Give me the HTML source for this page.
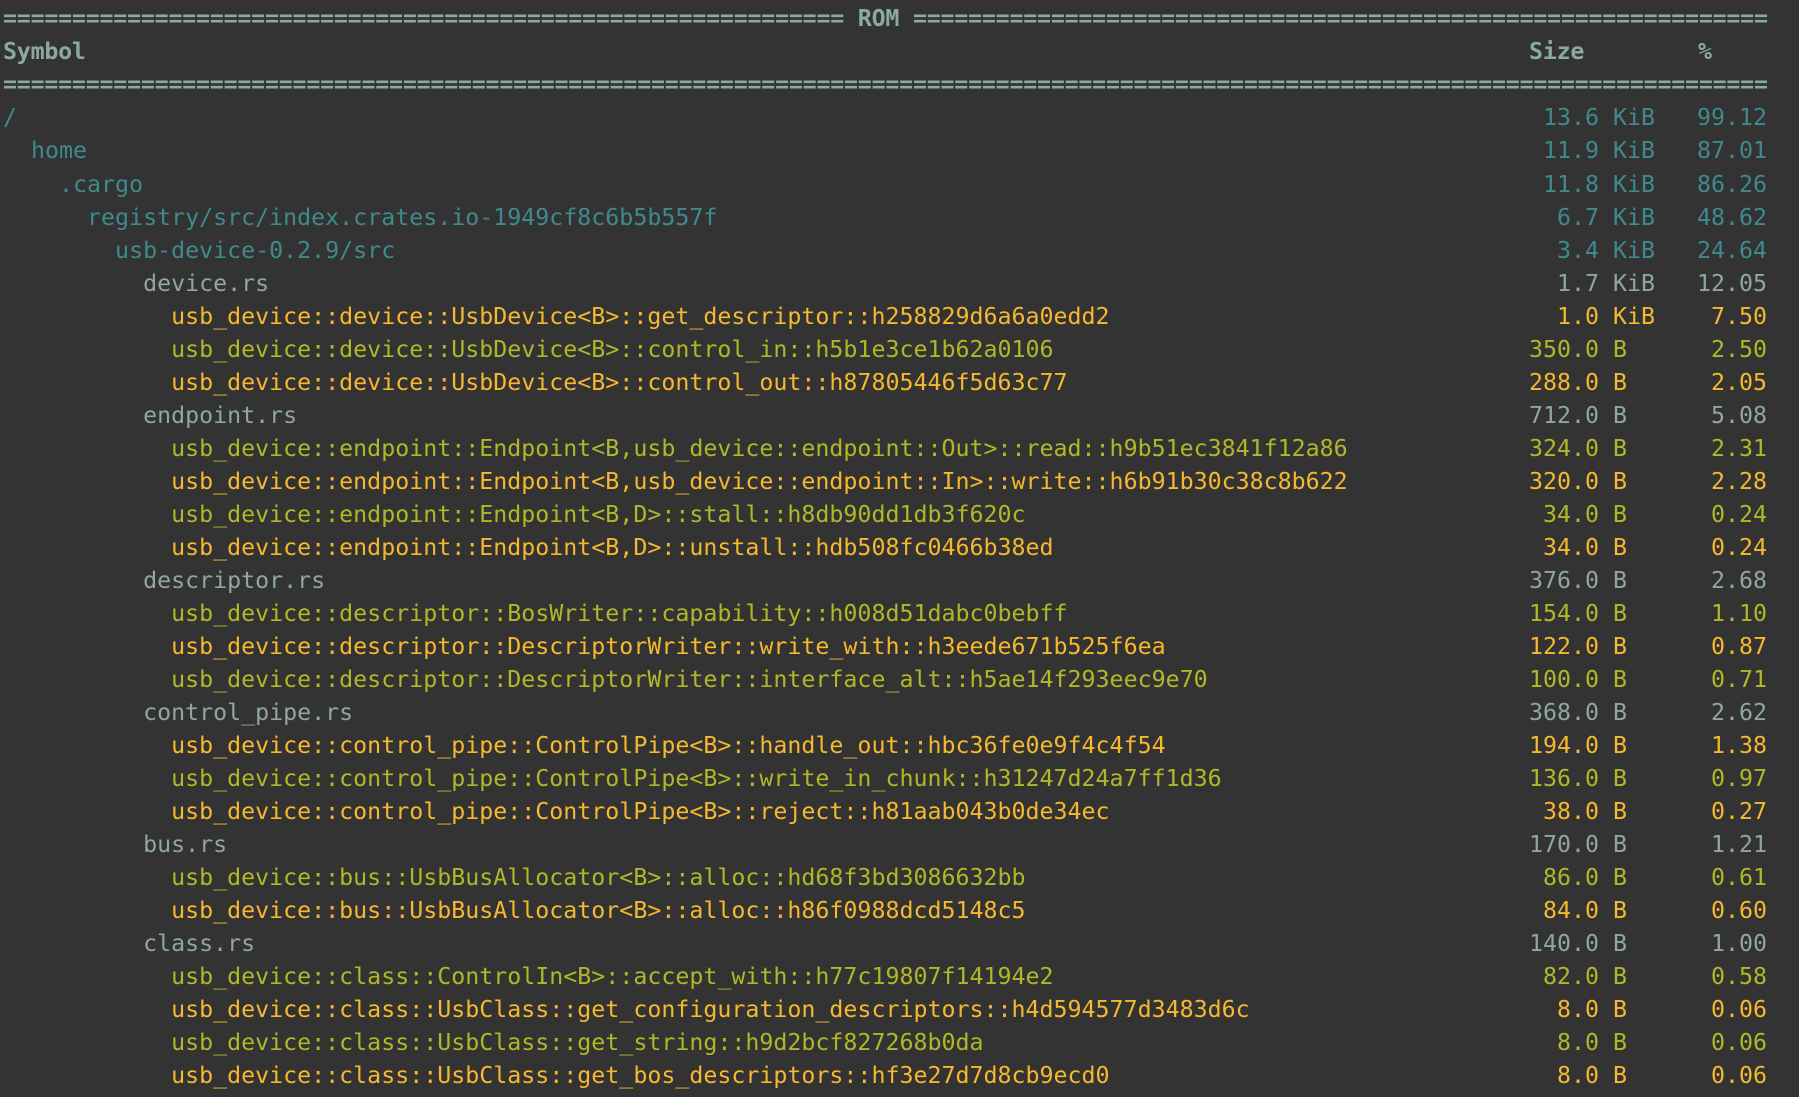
<!DOCTYPE html>
<html><head><meta charset="utf-8"><style>
html,body{margin:0;padding:0;background:#333333;width:1799px;height:1097px;overflow:hidden}
body{position:relative;font-family:"DejaVu Sans Mono","Liberation Mono",monospace;font-size:23.27px}
.r{position:absolute;left:0;width:1799px;height:33.03px;line-height:33.03px;white-space:pre}
.n{position:absolute;left:3px}
.s{position:absolute;right:200px;text-align:right}
.u{position:absolute;left:1613px}
.p{position:absolute;right:32px;text-align:right}
.h{color:#8aab9c;font-weight:bold;letter-spacing:-0.22px}
.t{color:#3f8a8e}
.g{color:#8fa89b}
.y{color:#f5b82e}
.l{color:#b0b828}
</style></head><body>
<div class="r h" style="top:1.5px"><span class="n">============================================================= ROM ==============================================================</span></div>
<div class="r h" style="top:34.5px"><span class="n">Symbol</span><span class="n" style="left:1529px">Size</span><span class="n" style="left:1698px">%</span></div>
<div class="r h" style="top:67.6px"><span class="n">================================================================================================================================</span></div>

<div class="r t" style="top:101.4px"><span class="n">/</span><span class="s">13.6</span><span class="u">KiB</span><span class="p">99.12</span></div>
<div class="r t" style="top:134.4px"><span class="n">  home</span><span class="s">11.9</span><span class="u">KiB</span><span class="p">87.01</span></div>
<div class="r t" style="top:167.5px"><span class="n">    .cargo</span><span class="s">11.8</span><span class="u">KiB</span><span class="p">86.26</span></div>
<div class="r t" style="top:200.5px"><span class="n">      registry/src/index.crates.io-1949cf8c6b5b557f</span><span class="s">6.7</span><span class="u">KiB</span><span class="p">48.62</span></div>
<div class="r t" style="top:233.5px"><span class="n">        usb-device-0.2.9/src</span><span class="s">3.4</span><span class="u">KiB</span><span class="p">24.64</span></div>
<div class="r g" style="top:266.6px"><span class="n">          device.rs</span><span class="s">1.7</span><span class="u">KiB</span><span class="p">12.05</span></div>
<div class="r y" style="top:299.6px"><span class="n">            usb_device::device::UsbDevice&lt;B&gt;::get_descriptor::h258829d6a6a0edd2</span><span class="s">1.0</span><span class="u">KiB</span><span class="p">7.50</span></div>
<div class="r l" style="top:332.6px"><span class="n">            usb_device::device::UsbDevice&lt;B&gt;::control_in::h5b1e3ce1b62a0106</span><span class="s">350.0</span><span class="u">B</span><span class="p">2.50</span></div>
<div class="r y" style="top:365.7px"><span class="n">            usb_device::device::UsbDevice&lt;B&gt;::control_out::h87805446f5d63c77</span><span class="s">288.0</span><span class="u">B</span><span class="p">2.05</span></div>
<div class="r g" style="top:398.7px"><span class="n">          endpoint.rs</span><span class="s">712.0</span><span class="u">B</span><span class="p">5.08</span></div>
<div class="r l" style="top:431.7px"><span class="n">            usb_device::endpoint::Endpoint&lt;B,usb_device::endpoint::Out&gt;::read::h9b51ec3841f12a86</span><span class="s">324.0</span><span class="u">B</span><span class="p">2.31</span></div>
<div class="r y" style="top:464.8px"><span class="n">            usb_device::endpoint::Endpoint&lt;B,usb_device::endpoint::In&gt;::write::h6b91b30c38c8b622</span><span class="s">320.0</span><span class="u">B</span><span class="p">2.28</span></div>
<div class="r l" style="top:497.8px"><span class="n">            usb_device::endpoint::Endpoint&lt;B,D&gt;::stall::h8db90dd1db3f620c</span><span class="s">34.0</span><span class="u">B</span><span class="p">0.24</span></div>
<div class="r y" style="top:530.8px"><span class="n">            usb_device::endpoint::Endpoint&lt;B,D&gt;::unstall::hdb508fc0466b38ed</span><span class="s">34.0</span><span class="u">B</span><span class="p">0.24</span></div>
<div class="r g" style="top:563.9px"><span class="n">          descriptor.rs</span><span class="s">376.0</span><span class="u">B</span><span class="p">2.68</span></div>
<div class="r l" style="top:596.9px"><span class="n">            usb_device::descriptor::BosWriter::capability::h008d51dabc0bebff</span><span class="s">154.0</span><span class="u">B</span><span class="p">1.10</span></div>
<div class="r y" style="top:629.9px"><span class="n">            usb_device::descriptor::DescriptorWriter::write_with::h3eede671b525f6ea</span><span class="s">122.0</span><span class="u">B</span><span class="p">0.87</span></div>
<div class="r l" style="top:662.9px"><span class="n">            usb_device::descriptor::DescriptorWriter::interface_alt::h5ae14f293eec9e70</span><span class="s">100.0</span><span class="u">B</span><span class="p">0.71</span></div>
<div class="r g" style="top:696.0px"><span class="n">          control_pipe.rs</span><span class="s">368.0</span><span class="u">B</span><span class="p">2.62</span></div>
<div class="r y" style="top:729.0px"><span class="n">            usb_device::control_pipe::ControlPipe&lt;B&gt;::handle_out::hbc36fe0e9f4c4f54</span><span class="s">194.0</span><span class="u">B</span><span class="p">1.38</span></div>
<div class="r l" style="top:762.0px"><span class="n">            usb_device::control_pipe::ControlPipe&lt;B&gt;::write_in_chunk::h31247d24a7ff1d36</span><span class="s">136.0</span><span class="u">B</span><span class="p">0.97</span></div>
<div class="r y" style="top:795.1px"><span class="n">            usb_device::control_pipe::ControlPipe&lt;B&gt;::reject::h81aab043b0de34ec</span><span class="s">38.0</span><span class="u">B</span><span class="p">0.27</span></div>
<div class="r g" style="top:828.1px"><span class="n">          bus.rs</span><span class="s">170.0</span><span class="u">B</span><span class="p">1.21</span></div>
<div class="r l" style="top:861.1px"><span class="n">            usb_device::bus::UsbBusAllocator&lt;B&gt;::alloc::hd68f3bd3086632bb</span><span class="s">86.0</span><span class="u">B</span><span class="p">0.61</span></div>
<div class="r y" style="top:894.2px"><span class="n">            usb_device::bus::UsbBusAllocator&lt;B&gt;::alloc::h86f0988dcd5148c5</span><span class="s">84.0</span><span class="u">B</span><span class="p">0.60</span></div>
<div class="r g" style="top:927.2px"><span class="n">          class.rs</span><span class="s">140.0</span><span class="u">B</span><span class="p">1.00</span></div>
<div class="r l" style="top:960.2px"><span class="n">            usb_device::class::ControlIn&lt;B&gt;::accept_with::h77c19807f14194e2</span><span class="s">82.0</span><span class="u">B</span><span class="p">0.58</span></div>
<div class="r y" style="top:993.3px"><span class="n">            usb_device::class::UsbClass::get_configuration_descriptors::h4d594577d3483d6c</span><span class="s">8.0</span><span class="u">B</span><span class="p">0.06</span></div>
<div class="r l" style="top:1026.3px"><span class="n">            usb_device::class::UsbClass::get_string::h9d2bcf827268b0da</span><span class="s">8.0</span><span class="u">B</span><span class="p">0.06</span></div>
<div class="r y" style="top:1059.3px"><span class="n">            usb_device::class::UsbClass::get_bos_descriptors::hf3e27d7d8cb9ecd0</span><span class="s">8.0</span><span class="u">B</span><span class="p">0.06</span></div>
<div class="r l" style="top:1092.4px"><span class="n">            usb_device::class::UsbClass::reset::h1f0a2e7c9b3d5e84</span><span class="s">8.0</span><span class="u">B</span><span class="p">0.06</span></div>
</body></html>
